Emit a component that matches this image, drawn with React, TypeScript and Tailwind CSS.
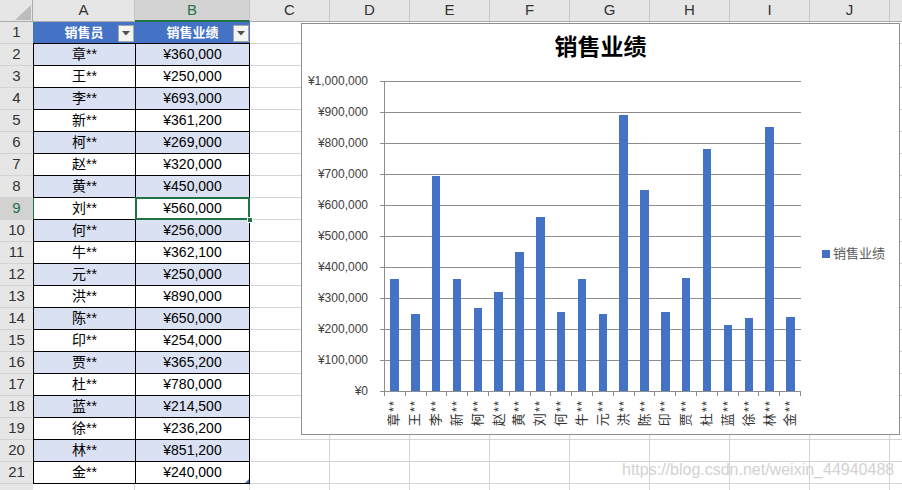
import React from 'react';

const rows: [string, number][] = [
  ['章**', 360000],
  ['王**', 250000],
  ['李**', 693000],
  ['新**', 361200],
  ['柯**', 269000],
  ['赵**', 320000],
  ['黄**', 450000],
  ['刘**', 560000],
  ['何**', 256000],
  ['牛**', 362100],
  ['元**', 250000],
  ['洪**', 890000],
  ['陈**', 650000],
  ['印**', 254000],
  ['贾**', 365200],
  ['杜**', 780000],
  ['蓝**', 214500],
  ['徐**', 236200],
  ['林**', 851200],
  ['金**', 240000],
];

const cols = ['C', 'D', 'E', 'F', 'G', 'H', 'I', 'J'];
const yTicks = ['¥1,000,000', '¥900,000', '¥800,000', '¥700,000', '¥600,000', '¥500,000', '¥400,000', '¥300,000', '¥200,000', '¥100,000', '¥0'];

const money = (n: number) => '¥' + n.toLocaleString('en-US');

const SheetTail = () => (
  <>
    {cols.map((c) => (
      <div key={c} className="w-[80px] shrink-0 border-r border-b border-[#d4d4d4]" />
    ))}
    <div className="flex-1 border-b border-[#d4d4d4]" />
  </>
);

const Dropdown = () => (
  <div className="absolute right-[1px] top-[3px] w-[16px] h-[17px] bg-[#f4f4f4] border border-[#a6a6a6] flex items-center justify-center">
    <svg width="8" height="5" viewBox="0 0 8 5">
      <path d="M0 0 H8 L4 4.5 Z" fill="#505050" />
    </svg>
  </div>
);

const RowHeader = ({ n, active }: { n?: number; active?: boolean }) => (
  <div
    className={`w-[33px] shrink-0 border-b border-[#d4d4d4] flex items-center justify-center text-[15px] ${
      active ? 'bg-[#d2d2d2] text-[#217346]' : 'bg-[#e6e6e6] text-[#333]'
    }`}
  >
    {n}
  </div>
);

const Chart = () => (
  <div className="absolute left-[301px] top-[23px] w-[599px] h-[412px] border border-[#8e8e8e] bg-white text-[#404040]">
    <div className="pt-[8px] text-center text-[23px] font-bold leading-[30px] text-black">销售业绩</div>
    <div className="flex items-start mt-[19px]">
      <div className="w-[66px] -mt-[15px] flex flex-col text-right text-[12px]">
        {yTicks.map((t) => (
          <div key={t} className="h-[31px] leading-[31px]">
            {t}
          </div>
        ))}
      </div>
      <div className="ml-[12px] w-[421px] flex flex-col">
        <div className="relative">
          {yTicks.slice(1).map((t) => (
            <div key={t} className="h-[31px] border-t border-[#8d8d8d]" />
          ))}
          <div className="h-0 border-t border-[#8d8d8d]" />
          <div className="absolute left-[4px] top-0 w-px h-[311px] bg-[#8d8d8d]" />
          <div className="absolute left-[4px] top-0 w-[417px] h-[310px] flex items-end">
            {rows.map(([name, v]) => (
              <div key={name} className="flex-1 flex justify-center">
                <div className="w-[8.5px] bg-[#4472c4]" style={{ height: (v / 1000000) * 310 }} />
              </div>
            ))}
          </div>
        </div>
        <div className="ml-[4px] w-[417px] h-[4px] flex">
          {rows.map(([name], i) => (
            <div
              key={name}
              className={`flex-1 border-l border-[#8d8d8d] ${i === rows.length - 1 ? 'border-r' : ''}`}
            />
          ))}
        </div>
        <div className="ml-[4px] w-[417px] flex pt-[4px]">
          {rows.map(([name]) => (
            <div key={name} className="flex-1 flex justify-center">
              <span className="[writing-mode:vertical-rl] [text-orientation:sideways] rotate-180 text-[13px] leading-[14px] tracking-[1px] text-[#333]">
                {name}
              </span>
            </div>
          ))}
        </div>
      </div>
      <div className="ml-[21px] mt-[163px] flex items-center gap-[3px] text-[13px] text-[#595959]">
        <div className="w-[8px] h-[8px] bg-[#4472c4]" />
        <span>销售业绩</span>
      </div>
    </div>
  </div>
);

export default function App() {
  return (
    <div className="relative w-[902px] h-[490px] overflow-hidden bg-white font-['Liberation_Sans','Noto_Sans_CJK_SC',sans-serif] text-[14px] text-black">
      {/* column headers */}
      <div className="flex h-[22px] bg-[#e6e6e6] text-[15px] text-[#333]">
        <div className="relative w-[33px] shrink-0 border-r border-b border-[#ababab]">
          <svg className="absolute left-[15px] top-[5px]" width="16" height="15" viewBox="0 0 16 15">
            <path d="M16 0 V15 H0 Z" fill="#bcbcbc" />
          </svg>
        </div>
        <div className="w-[102px] shrink-0 border-r border-b border-[#c6c6c6] border-b-[#ababab] flex items-center justify-center">A</div>
        <div className="w-[115px] shrink-0 border-r border-[#c6c6c6] border-b-2 border-b-[#217346] bg-[#d2d2d2] text-[#217346] flex items-center justify-center">
          B
        </div>
        {cols.map((c) => (
          <div
            key={c}
            className="w-[80px] shrink-0 border-r border-b border-[#c6c6c6] border-b-[#ababab] flex items-center justify-center"
          >
            {c}
          </div>
        ))}
        <div className="flex-1 border-b border-[#ababab]" />
      </div>

      {/* row 1: table header */}
      <div className="flex h-[22px]">
        <RowHeader n={1} />
        <div className="relative w-[102px] shrink-0 bg-[#4472c4] border-b border-black flex items-center justify-center text-[13px] font-bold text-white">
          销售员
          <Dropdown />
        </div>
        <div className="relative w-[115px] shrink-0 bg-[#4472c4] border-b border-black flex items-center justify-center text-[13px] font-bold text-white">
          销售业绩
          <Dropdown />
        </div>
        <SheetTail />
      </div>

      {rows.map(([name, v], i) => {
        const r = i + 2;
        const shaded = r % 2 === 0;
        const active = r === 9;
        const last = r === 21;
        return (
          <div key={name} className={`flex h-[22px] ${shaded ? 'bg-[#d9e1f2]' : 'bg-white'}`}>
            <RowHeader n={r} active={active} />
            <div
              className={`w-[102px] shrink-0 border-l border-b border-black flex items-center justify-center ${
                active ? 'border-l-[#217346]' : ''
              }`}
            >
              {name}
            </div>
            <div className="relative w-[115px] shrink-0 border-l border-r border-b border-black flex items-center justify-center">
              {money(v)}
              {active && (
                <>
                  <div className="absolute -left-px -top-px right-[-1px] bottom-[-1px] border-2 border-[#217346]" />
                  <div className="absolute right-[-4px] bottom-[-4px] w-[6px] h-[6px] bg-[#217346] border border-white z-10" />
                </>
              )}
              {last && (
                <svg className="absolute right-0 bottom-0" width="4" height="4" viewBox="0 0 4 4">
                  <path d="M4 0 V4 H0 Z" fill="#4472c4" />
                </svg>
              )}
            </div>
            <div className="flex bg-white flex-1">
              <SheetTail />
            </div>
          </div>
        );
      })}

      {[22, 23].map((r) => (
        <div key={r} className="flex h-[22px]">
          <RowHeader />
          <div className="w-[102px] shrink-0 border-r border-b border-[#d4d4d4]" />
          <div className="w-[115px] shrink-0 border-r border-b border-[#d4d4d4]" />
          <SheetTail />
        </div>
      ))}

      <Chart />

      <div className="absolute left-[622px] top-[460px] text-[16px] leading-[20px] text-[#d2d2d2]">
        https://blog.csdn.net/weixin_44940488
      </div>
    </div>
  );
}
